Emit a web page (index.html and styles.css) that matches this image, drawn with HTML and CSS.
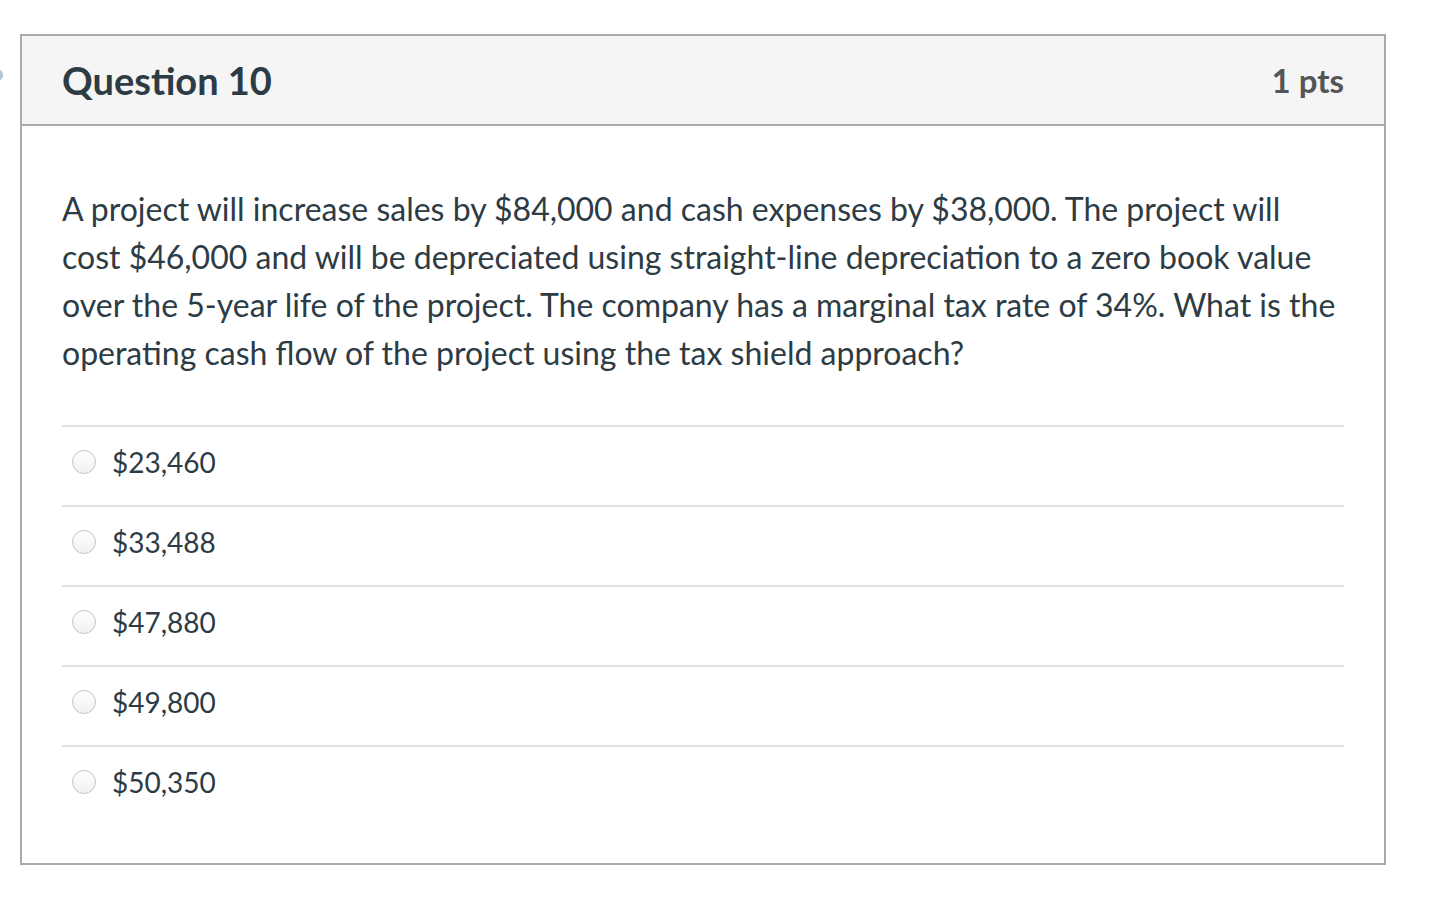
FILE: index.html
```html
<!DOCTYPE html>
<html lang="en">
<head>
<meta charset="utf-8">
<title>Question 10</title>
<link rel="stylesheet" href="styles.css">
</head>
<body>
<span class="edge-mark"></span>
<div class="question">
  <div class="q-header">
    <h2 class="q-title">Question 10</h2>
    <span class="q-points">1 pts</span>
  </div>
  <div class="q-body">
    <p class="q-text">A project will increase sales by $84,000 and cash expenses by $38,000. The project will cost $46,000 and will be depreciated using straight-line depreciation to a zero book value over the 5-year life of the project. The company has a marginal tax rate of 34%. What is the operating cash flow of the project using the tax shield approach?</p>
    <div class="answers">
      <label class="answer"><span class="radio"></span><span class="a-text">$23,460</span></label>
      <label class="answer"><span class="radio"></span><span class="a-text">$33,488</span></label>
      <label class="answer"><span class="radio"></span><span class="a-text">$47,880</span></label>
      <label class="answer"><span class="radio"></span><span class="a-text">$49,800</span></label>
      <label class="answer"><span class="radio"></span><span class="a-text">$50,350</span></label>
    </div>
  </div>
</div>
</body>
</html>
```
FILE: styles.css
```css
html, body {
  margin: 0;
  padding: 0;
  background: #ffffff;
}
body {
  font-family: Lato, "Open Sans", sans-serif;
  color: #2d3b45;
  padding: 34px 0 0 20px;
}
.edge-mark {
  position: absolute;
  left: -4px;
  top: 70px;
  width: 7px;
  height: 10px;
  border-radius: 50%;
  background: #8fb0c6;
  opacity: 0.7;
}
.question {
  width: 1362px;
  border: 2px solid #aaaaaa;
  background: #fff;
}
.q-header {
  display: flex;
  align-items: center;
  justify-content: space-between;
  height: 88px;
  padding: 0 40px;
  background: #f5f5f5;
  border-bottom: 2px solid #aaaaaa;
}
.q-title {
  margin: 0;
  font-size: 38px;
  font-weight: 700;
  color: #2d3b45;
}
.q-points {
  font-size: 33px;
  font-weight: 700;
  color: #555555;
}
.q-body {
  padding: 59px 40px 38px;
}
.q-text {
  margin: 0 0 48px;
  font-size: 32px;
  line-height: 48px;
}
.answers {
  display: flex;
  flex-direction: column;
}
.answer {
  display: flex;
  align-items: center;
  box-sizing: border-box;
  height: 80px;
  padding-bottom: 8px;
  border-top: 2px solid #e0e0e0;
  font-size: 28px;
}
.radio {
  width: 22px;
  height: 22px;
  margin: 0 16px 0 10px;
  border-radius: 50%;
  border: 1px solid #c4c4c4;
  background: linear-gradient(#ffffff, #f0f0f0);
  box-sizing: content-box;
}
.a-text {
  line-height: 1;
}
```
